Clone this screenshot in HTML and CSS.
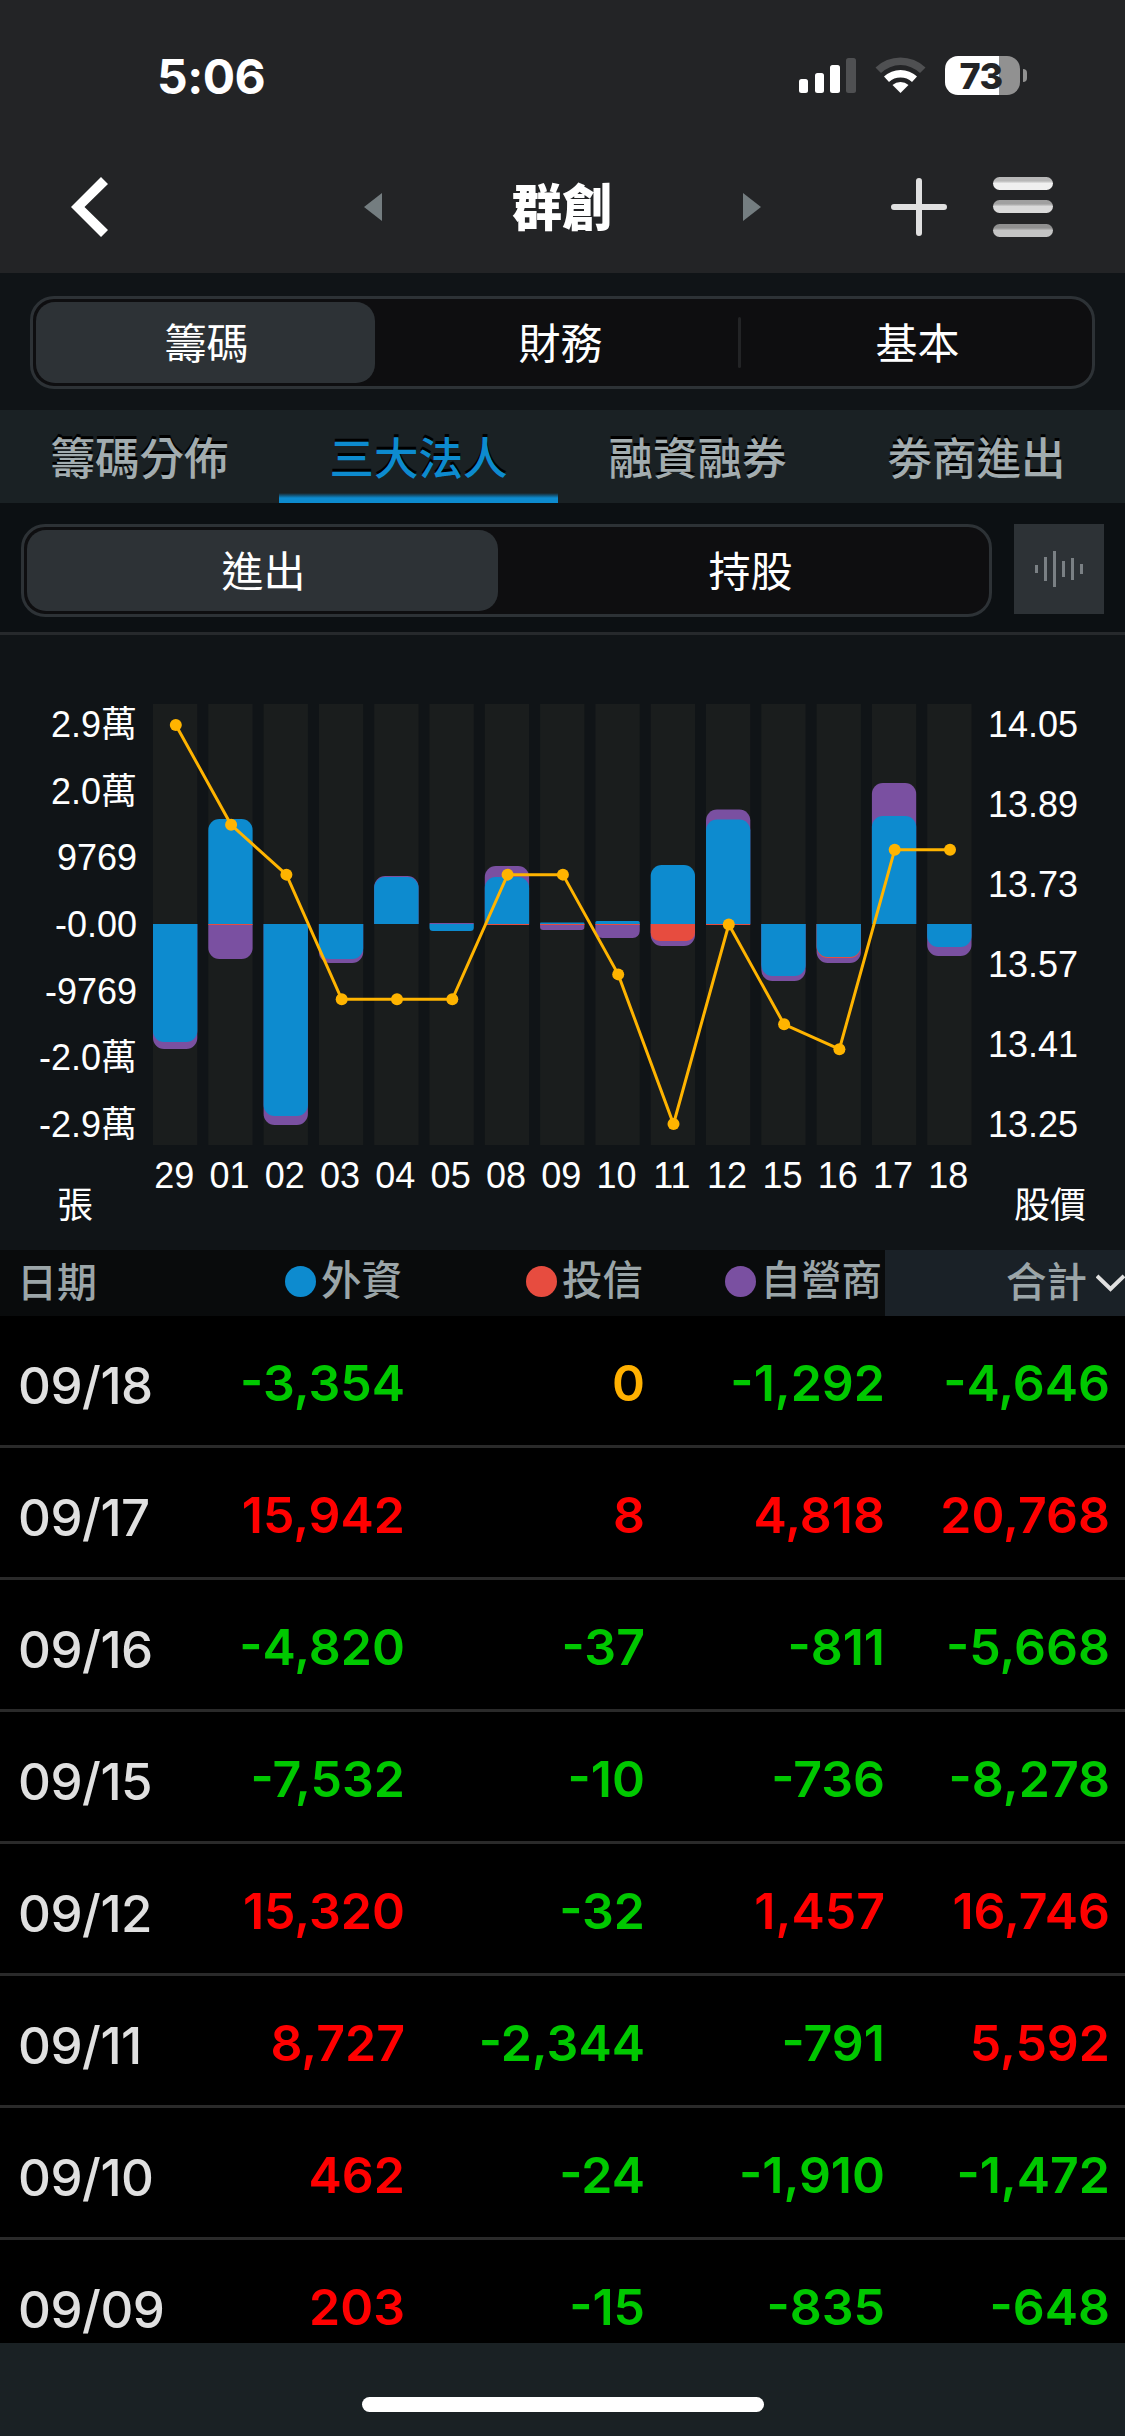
FILE: index.html
```html
<!DOCTYPE html>
<html lang="zh-Hant">

<head>
    <meta charset="UTF-8">
    <meta name="viewport" content="width=device-width, initial-scale=1.0">
    <title>群創</title>
    <link rel="stylesheet" href="styles.css">
</head>

<body>
    <div class="app">
        <!-- 頂部 -->
        <header class="header">
            <div class="status">
                <span class="time">5:06</span>
                <div class="status-icons">
                    <svg class="signal" width="57" height="36" viewBox="0 0 57 36" fill="#fff">
                        <rect x="0" y="22" width="9" height="14" rx="2.5" />
                        <rect x="16" y="16" width="9" height="20" rx="2.5" />
                        <rect x="31" y="8" width="10" height="28" rx="2.5" />
                        <rect x="47" y="1" width="10" height="35" rx="2.5" fill="#4f5052" />
                    </svg>
                    <svg class="wifi" width="51" height="37" viewBox="0 0 51 37">
                        <path d="M0.5 11.5 A36 36 0 0 1 50.5 11.5 L45 17 A28 28 0 0 0 6 17 Z" fill="#4f5052" />
                        <path d="M9 20.5 A24 24 0 0 1 42 20.5 L37 26 A17 17 0 0 0 14 26 Z" fill="#fff" />
                        <path d="M17.5 29 A12 12 0 0 1 33.5 29 L25.5 37 Z" fill="#fff" />
                    </svg>
                    <div class="battery"><span>73</span></div>
                </div>
            </div>
            <div class="nav">
                <svg class="back" width="38" height="62" viewBox="0 0 38 62">
                    <path d="M0 31 L30 1 L37 8 L13.5 31 L37 54 L30 61 Z" fill="#fff" />
                </svg>
                <div class="nav-title">
                    <svg width="18" height="28" viewBox="0 0 18 28"><path d="M0 14 L18 0 V28 Z" fill="#747d80" /></svg>
                    <h1>群創</h1>
                    <svg width="18" height="28" viewBox="0 0 18 28"><path d="M18 14 L0 0 V28 Z" fill="#747d80" /></svg>
                </div>
                <svg class="plus" width="58" height="60" viewBox="0 0 58 60" stroke="#e0e0e0" stroke-width="6" stroke-linecap="round">
                    <path d="M29 4 V56 M4 30 H54" />
                </svg>
                <div class="menu">
                    <i class="m1"></i>
                    <i class="m2"></i>
                    <i class="m3"></i>
                </div>
            </div>
        </header>

        <div class="seg-wrap">
            <div class="seg seg-three">
                <a class="on">籌碼</a>
                <a>財務</a>
                <i class="divider"></i>
                <a>基本</a>
            </div>
        </div>

        <nav class="tabs">
            <a>籌碼分佈</a>
            <a class="current">三大法人</a>
            <a>融資融券</a>
            <a>劵商進出</a>
        </nav>

        <div class="tools">
            <div class="seg seg-two">
                <a class="on">進出</a>
                <a>持股</a>
            </div>
            <div class="wave">
                <svg width="48" height="36" viewBox="0 0 48 36" fill="#7a8084">
                    <rect x="0" y="14" width="3" height="8" />
                    <rect x="9" y="6" width="3" height="24" />
                    <rect x="18" y="0" width="3" height="36" />
                    <rect x="27" y="10" width="3" height="16" />
                    <rect x="36" y="7" width="3" height="22" />
                    <rect x="45" y="13" width="3" height="10" />
                </svg>
            </div>
        </div>

        <!-- 圖表 -->
        <section class="chart">
            <div class="axis axis-l">
                <span>2.9萬</span>
                <span>2.0萬</span>
                <span>9769</span>
                <span>-0.00</span>
                <span>-9769</span>
                <span>-2.0萬</span>
                <span>-2.9萬</span>
            </div>
            <svg class="plot" width="819" height="441" viewBox="0 0 819 441"></svg>
            <div class="axis axis-r">
                <span>14.05</span>
                <span>13.89</span>
                <span>13.73</span>
                <span>13.57</span>
                <span>13.41</span>
                <span>13.25</span>
            </div>
            <div class="days">
                <span>29</span><span>01</span><span>02</span><span>03</span><span>04</span><span>05</span><span>08</span><span>09</span><span>10</span><span>11</span><span>12</span><span>15</span><span>16</span><span>17</span><span>18</span>
            </div>
            <div class="units">
                <span>張</span>
                <span>股價</span>
            </div>
        </section>

        <!-- 表格 -->
        <div class="row thead">
            <span class="date">日期</span>
            <span><i class="dot blue"></i>外資</span>
            <span><i class="dot orange"></i>投信</span>
            <span class="dealer"><i class="dot purple"></i>自營商</span>
            <span class="sum">合計<svg width="29" height="20" viewBox="0 0 29 20" fill="none" stroke="#e0e0e0" stroke-width="4"><path d="M1 3 L14.5 16 L28 3" /></svg></span>
        </div>
        <div class="list">
            <div class="row"><span class="date">09/18</span><span class="down">-3,354</span><span class="flat">0</span><span class="down">-1,292</span><span class="down">-4,646</span></div>
            <div class="row"><span class="date">09/17</span><span class="up">15,942</span><span class="up">8</span><span class="up">4,818</span><span class="up">20,768</span></div>
            <div class="row"><span class="date">09/16</span><span class="down">-4,820</span><span class="down">-37</span><span class="down">-811</span><span class="down">-5,668</span></div>
            <div class="row"><span class="date">09/15</span><span class="down">-7,532</span><span class="down">-10</span><span class="down">-736</span><span class="down">-8,278</span></div>
            <div class="row"><span class="date">09/12</span><span class="up">15,320</span><span class="down">-32</span><span class="up">1,457</span><span class="up">16,746</span></div>
            <div class="row"><span class="date">09/11</span><span class="up">8,727</span><span class="down">-2,344</span><span class="down">-791</span><span class="up">5,592</span></div>
            <div class="row"><span class="date">09/10</span><span class="up">462</span><span class="down">-24</span><span class="down">-1,910</span><span class="down">-1,472</span></div>
            <div class="row"><span class="date">09/09</span><span class="up">203</span><span class="down">-15</span><span class="down">-835</span><span class="down">-648</span></div>
        </div>

        <footer class="footer"><i></i></footer>
    </div>

    <script src="chart.js"></script>
</body>

</html>
```

FILE: styles.css
```css
* {
    margin: 0;
    padding: 0;
    box-sizing: border-box;
}

body {
    background-color: #101417;
    color: #fff;
    font-family: Inter, "Noto Sans CJK TC", sans-serif;
}

.app {
    display: flex;
    flex-direction: column;
    width: 1125px;
    height: 2436px;
    overflow: hidden;
}

/* 頂部 */
.header {
    height: 273px;
    background-color: #232426;
}

.status {
    display: flex;
    justify-content: space-between;
    height: 141px;
    padding: 0 105px 0 157px;
}

.time {
    padding-top: 46px;
    font-size: 48px;
    line-height: 61px;
    font-weight: 700;
    letter-spacing: -0.5px;
}

.status-icons {
    display: flex;
    padding-top: 56px;
}

.signal {
    margin: 1px 19px 0 0;
}

.wifi {
    margin-right: 19px;
}

.battery {
    position: relative;
    width: 75px;
    height: 39px;
    border-radius: 13px;
    background: linear-gradient(to right, #fff 54px, #919191 54px);
    text-align: center;
    color: #232426;
    font-size: 36px;
    line-height: 40px;
    font-weight: 800;
}

.battery span {
    padding-right: 3px;
    letter-spacing: -0.5px;
}

.battery::after {
    content: "";
    position: absolute;
    left: 78px;
    top: 13px;
    width: 4px;
    height: 13px;
    border-radius: 0 4px 4px 0;
    background-color: #919191;
}

.nav {
    display: flex;
    align-items: center;
    height: 131px;
    padding-left: 71px;
}

.nav-title {
    display: flex;
    align-items: center;
    justify-content: space-between;
    width: 397px;
    margin-left: 255px;
}

.nav-title h1 {
    padding: 2px 1px 0 0;
    font-size: 50px;
    line-height: 60px;
    font-weight: 900;
}

.plus {
    margin-left: 129px;
}

.menu {
    margin-left: 45px;
}

.menu i {
    display: block;
    width: 60px;
    height: 13px;
    border-radius: 7px;
}

.menu i + i {
    margin-top: 10.5px;
}

.m1 {
    background: linear-gradient(#b8b8b8 30%, #f0f0f0 50%);
}

.m2 {
    background: linear-gradient(#a0a0a0 30%, #dadada 50%);
}

.m3 {
    background: linear-gradient(#909090 30%, #c4c4c4 50%);
}

/* 分段按鈕 */
.seg-wrap {
    height: 137px;
    padding: 23px 30px 0;
}

.seg {
    display: grid;
    height: 93px;
    padding: 3px;
    border: 3px solid #2d3236;
    border-radius: 24px;
    background-color: #0e0e10;
    font-size: 42px;
    line-height: 83px;
    text-align: center;
}

.seg a {
    height: 81px;
}

.seg .on {
    padding-left: 2px;
    border-radius: 19px;
    background-color: #2d3236;
}

.seg-three {
    grid-template-columns: 339px 8px 355px 3px 1fr;
}

.seg-three .on {
    grid-column: 1 / 2;
}

.seg-three .on + a {
    grid-column: 3 / 4;
}

.divider {
    align-self: center;
    height: 51px;
    border-radius: 2px;
    background-color: #232426;
}

.divider + a {
    padding-left: 5px;
}

.tabs {
    display: flex;
    height: 93px;
    background-color: #1a2124;
}

.tabs a {
    width: 279px;
    padding-top: 6px;
    line-height: 86px;
    font-size: 44.5px;
    font-weight: 500;
    text-align: center;
    color: #a2acaf;
    text-shadow: 0 -3px 0 #000;
}

.tabs .current {
    color: #0d8bcf;
    background: linear-gradient(rgba(13, 139, 207, 0), #0d8bcf 5px) bottom / 100% 10px no-repeat;
}

.tools {
    display: flex;
    align-items: flex-start;
    height: 132px;
    padding: 21px 21px 0;
    border-bottom: 3px solid #26292c;
    background-color: #0c1013;
}

.seg-two {
    width: 971px;
    grid-template-columns: 471px 1fr;
}

.seg-two a + a {
    padding-left: 17px;
}

.wave {
    display: flex;
    align-items: center;
    justify-content: center;
    width: 90px;
    height: 90px;
    margin-left: 22px;
    background-color: #2d3236;
}

/* 圖表 */
.chart {
    display: grid;
    grid-template-columns: 137px 819px 1fr;
    column-gap: 16px;
    grid-template-rows: 441px 50px auto;
    height: 615px;
    padding-top: 69px;
    font-family: "Liberation Sans", "Noto Sans CJK TC", sans-serif;
    font-size: 36px;
}

.axis {
    display: flex;
    flex-direction: column;
    justify-content: space-between;
    padding-top: 1px;
    line-height: 40px;
}

.axis span {
    height: 40px;
}

.axis-l {
    text-align: right;
}

.days {
    grid-column: 2;
    display: flex;
    padding-top: 11px;
}

.days span {
    display: flex;
    flex: 0 0 55.3px;
    justify-content: center;
    padding-right: 13px;
    line-height: 40px;
}

.units {
    grid-column: 1 / 4;
    display: flex;
    justify-content: space-between;
    padding: 1px 39px 0 57px;
    line-height: 20px;
}

/* 表格 */
.row {
    display: grid;
    grid-template-columns: 195px 210px 240px 240px 225px 15px;
    height: 132px;
    border-bottom: 3px solid #2a2a2a;
    font-size: 50px;
    font-weight: 600;
    line-height: 134px;
    text-align: right;
}

.row .date {
    padding: 3px 0 0 18px;
    text-align: left;
    color: #e0e0e0;
    font-size: 51px;
    font-weight: 500;
    letter-spacing: -0.5px;
}

.row.thead {
    grid-template-columns: 162px 240px 241px 242px 240px;
    height: 66px;
    border: 0;
    background-color: #090b0c;
    color: #9ba5a8;
    font-size: 40.5px;
    font-weight: 500;
    line-height: 62px;
}

.thead span {
    display: flex;
    align-items: center;
    justify-content: flex-end;
    height: 66px;
    padding-bottom: 4px;
}

.thead .date {
    justify-content: flex-start;
    padding: 0 0 0 17px;
    color: #9ba5a8;
    font-size: 40px;
    letter-spacing: 0;
}

.thead .dealer {
    padding-right: 3px;
}

.thead .sum {
    padding: 0;
    background-color: #1a2127;
}

.sum svg {
    margin-left: 9px;
}

.dot {
    width: 31px;
    height: 31px;
    margin-right: 5px;
    border-radius: 50%;
}

.blue {
    background-color: #0d8bcf;
}

.orange {
    background-color: #e74c3f;
}

.purple {
    background-color: #7a50a1;
}

.list {
    height: 1027px;
    overflow: hidden;
    background-color: #000;
}

.up {
    color: #f00;
}

.down {
    color: #00c800;
}

.flat {
    color: #ffb000;
}

.footer {
    height: 93px;
    padding-top: 54px;
    background-color: #1a2124;
}

.footer i {
    display: block;
    width: 402px;
    height: 15px;
    margin: 0 auto;
    border-radius: 8px;
    background-color: #fff;
}
```

FILE: chart.js
```javascript
// 每天的資料: 外資, 投信, 自營商(像素高度，正數向上), 收盤價
let data = [
    [-118, 0, -7, 14.05],
    [105, -1, -34, 13.85],
    [-192, 0, -9, 13.75],
    [-35, 0, -4, 13.5],
    [47, 0, 1, 13.5],
    [-7, 0, 1, 13.5],
    [47, -1, 11, 13.75],
    [1.4, -1, -5, 13.75],
    [3, -1, -13, 13.55],
    [59, -17, -5, 13.25],
    [104.5, -1, 10, 13.65],
    [-52, 0, -5, 13.45],
    [-33, -1, -5, 13.4],
    [108, 0, 33, 13.8],
    [-23, 0, -9, 13.8]
];
let colors = ['#0d8bcf', '#e74c3f', '#7a50a1'];
let plot = document.querySelector('.plot');
let step = 55.3;
let w = 44.3;
let zero = 220;
let html = '';
let points = [];
let dots = '';

// 從零軸畫出的柱子，只有外側是圓角
function bar(x, h, color) {
    let r = Math.min(11, Math.abs(h) / 2);
    let s = h > 0 ? -1 : 1;
    let end = zero - h;
    let arc = 'A' + r + ' ' + r + ' 0 0 ' + (h > 0 ? 1 : 0) + ' ';
    return '<path fill="' + color + '" d="M' + x + ' ' + zero +
        'V' + (end - s * r) + arc + (x + r) + ' ' + end +
        'H' + (x + w - r) + arc + (x + w) + ' ' + (end - s * r) +
        'V' + zero + 'Z"/>';
}

for (let i = 0; i < data.length; i++) {
    let x = i * step;
    html += '<rect x="' + x + '" y="0" width="' + w + '" height="441" fill="#1a1d1d"/>';
    let up = 0;
    let down = 0;
    let bars = '';
    for (let k = 0; k < 3; k++) {
        let v = data[i][k];
        if (v > 0) {
            up += v;
            bars = bar(x, up, colors[k]) + bars;
        } else if (v < 0) {
            down += v;
            bars = bar(x, down, colors[k]) + bars;
        }
    }
    html += bars;
    let px = x + 22.8;
    let py = 21 + (14.05 - data[i][3]) / 0.8 * 399;
    points.push(px + ',' + py);
    dots += '<circle cx="' + px + '" cy="' + py + '" r="6" fill="#ffb400"/>';
}
html += '<polyline points="' + points.join(' ') + '" fill="none" stroke="#ffb400" stroke-width="3"/>' + dots;
plot.innerHTML = html;
```
